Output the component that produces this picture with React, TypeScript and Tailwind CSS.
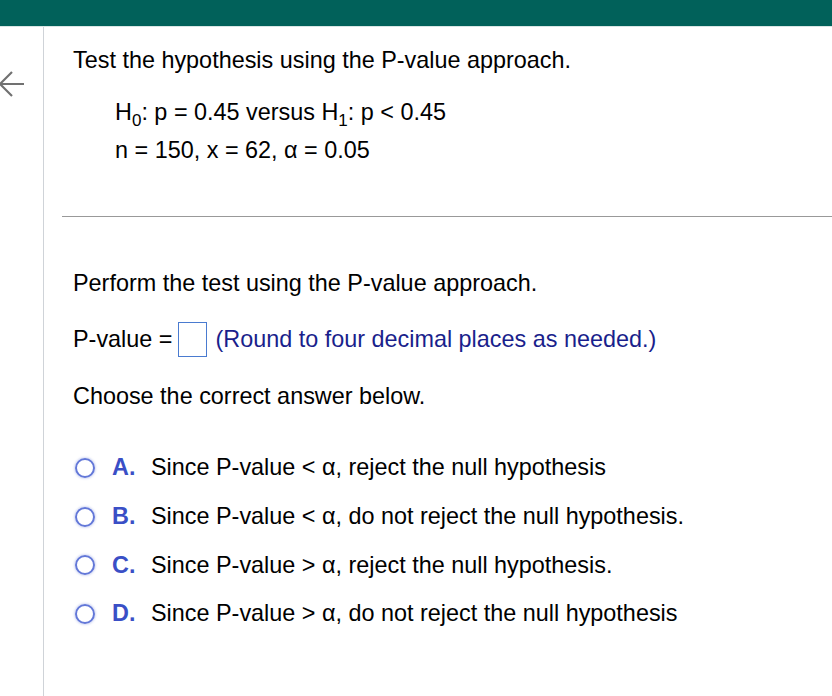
import React from 'react';

const options = [
  { key: 'A', text: 'Since P-value < \u03b1, reject the null hypothesis' },
  { key: 'B', text: 'Since P-value < \u03b1, do not reject the null hypothesis.' },
  { key: 'C', text: 'Since P-value > \u03b1, reject the null hypothesis.' },
  { key: 'D', text: 'Since P-value > \u03b1, do not reject the null hypothesis' },
];

export default function App() {
  return (
    <div
      className="w-[832px] h-[696px] bg-white text-black overflow-hidden flex flex-col"
      style={{ fontFamily: '"Liberation Sans", Arial, Helvetica, sans-serif' }}
    >
      {/* top bar */}
      <div className="h-[26px] bg-[#01615a] flex-none" />
      <div className="h-px bg-[#d9e6e4] flex-none" />

      <div className="flex flex-1">
        {/* left rail with back arrow */}
        <div className="w-[44px] flex-none border-r border-[#cfd3d8] pt-[42px]">
          <svg width="28" height="30" viewBox="0 0 28 30" className="block -ml-[4px]">
            <path d="M28 15 H4 M16 3 L4 15 L16 27" fill="none" stroke="#717171" strokeWidth="2.2" />
          </svg>
        </div>

        {/* content */}
        <div className="flex-1 pl-[18px] pt-[19px] text-[23.4px]">
          <div className="pl-[11px]">
            <p className="leading-[28px]">Test the hypothesis using the P-value approach.</p>
            <div className="pl-[42px] mt-[19px]">
              <p className="leading-[38px] h-[38px]">
                H<span className="text-[17px] leading-none relative top-[6px]">0</span>: p = 0.45 versus H
                <span className="text-[17px] leading-none relative top-[6px]">1</span>: p &lt; 0.45
              </p>
              <p className="leading-[38px] h-[38px]">n = 150, x = 62, &alpha; = 0.05</p>
            </div>
          </div>

          <div className="mt-[47px] h-px bg-[#999999]" />

          <div className="pl-[11px]">
            <p className="mt-[52px] leading-[28px]">Perform the test using the P-value approach.</p>

            <div className="mt-[24px] flex items-center h-[36px]">
              <span className="leading-[28px]">P-value =</span>
              <span className="ml-[6px] w-[29px] h-[35px] border border-[#4a7bd0] inline-block" />
              <span className="ml-[8px] leading-[28px] text-[#1a1f8c]">
                (Round to four decimal places as needed.)
              </span>
            </div>

            <p className="mt-[25px] leading-[28px]">Choose the correct answer below.</p>

            <div className="mt-[44px] flex flex-col gap-[20.6px]">
              {options.map((o) => (
                <div key={o.key} className="flex items-center h-[28px]">
                  <span className="ml-[2px] w-[20px] h-[20px] rounded-full border-2 border-[#6378d8] shadow-[0_0_2px_1px_rgba(99,120,216,0.25)] inline-block flex-none" />
                  <span className="ml-[17px] w-[39px] font-bold text-[#3a4fc6]">{o.key}.</span>
                  <span>{o.text}</span>
                </div>
              ))}
            </div>
          </div>
        </div>
      </div>
    </div>
  );
}
